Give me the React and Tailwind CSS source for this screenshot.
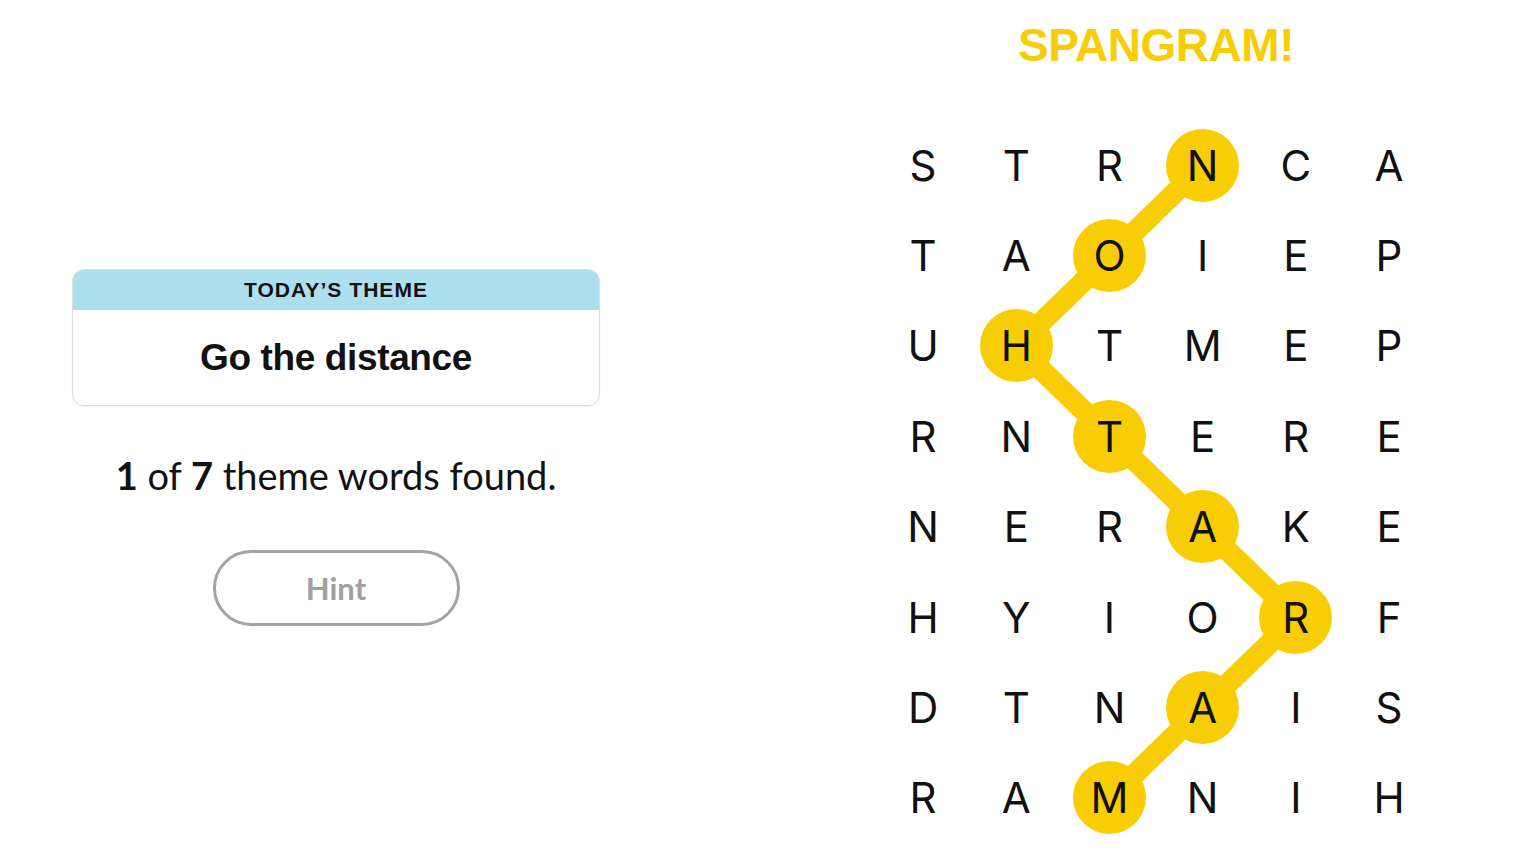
import React from 'react';

const rows = [
  'STRNCA',
  'TAOIEP',
  'UHTMEP',
  'RNTERE',
  'NERAKE',
  'HYIORF',
  'DTNAIS',
  'RAMNIH',
];

// spangram path as [row, col]
const path = [
  [0, 3],
  [1, 2],
  [2, 1],
  [3, 2],
  [4, 3],
  [5, 4],
  [6, 3],
  [7, 2],
];

const CELL_W = 93.2;
const CELL_H = 90.4;

function isOnPath(r, c) {
  return path.some(([pr, pc]) => pr === r && pc === c);
}

function Board() {
  const points = path
    .map(([r, c]) => `${c * CELL_W + CELL_W / 2},${r * CELL_H + CELL_H / 2}`)
    .join(' ');

  return (
    <div className="relative w-[559px] h-[723px]">
      <svg className="absolute inset-0" width="559" height="723">
        <polyline
          points={points}
          fill="none"
          stroke="#f8cd05"
          strokeWidth="21"
          strokeLinejoin="round"
          strokeLinecap="round"
        />
      </svg>
      <div className="relative grid grid-cols-[repeat(6,93.2px)] grid-rows-[repeat(8,90.4px)]">
        {rows.map((row, r) =>
          row.split('').map((ch, c) => (
            <div key={`${r}-${c}`} className="flex items-center justify-center">
              <div
                className={`w-[73px] h-[73px] rounded-full flex items-center justify-center text-[42px] text-[#111] font-['Inter',sans-serif] ${
                  isOnPath(r, c) ? 'bg-[#f8cd05]' : ''
                }`}
              >
                {ch}
              </div>
            </div>
          ))
        )}
      </div>
    </div>
  );
}

export default function App() {
  return (
    <div className="w-[1536px] h-[864px] bg-white flex overflow-hidden">
      <div className="w-[672px] flex flex-col items-center pt-[269px]">
        <div className="w-[528px] rounded-xl border border-[#dcdcdc] overflow-hidden shadow-[0_1px_2px_rgba(0,0,0,0.06)]">
          <div className="h-[40px] bg-[#aedfee] flex items-center justify-center font-['Liberation_Sans',sans-serif] font-semibold text-[21px] tracking-[0.05em] text-[#121212]">
            TODAY’S THEME
          </div>
          <div className="h-[95px] flex items-center justify-center font-['Liberation_Sans',sans-serif] font-bold text-[37px] text-[#121212] tracking-[-0.01em]">
            Go the distance
          </div>
        </div>
        <p className="mt-[50px] font-['Lato',sans-serif] text-[38px] text-[#121212] leading-none">
          <span className="font-bold">1</span> of <span className="font-bold">7</span> theme words found.
        </p>
        <button className="mt-[56px] w-[247px] h-[76px] rounded-full border-[3px] border-[#a3a3a3] font-['Lato',sans-serif] font-bold text-[31px] text-[#a0a0a0]">
          Hint
        </button>
      </div>
      <div className="w-[760px] ml-auto flex flex-col items-center">
        <h1 className="mt-[18px] h-[54px] font-['Liberation_Sans',sans-serif] font-bold text-[46px] leading-[54px] text-[#f8cd05] tracking-[-0.01em]">
          SPANGRAM!
        </h1>
        <div className="mt-[48px]">
          <Board />
        </div>
      </div>
    </div>
  );
}
